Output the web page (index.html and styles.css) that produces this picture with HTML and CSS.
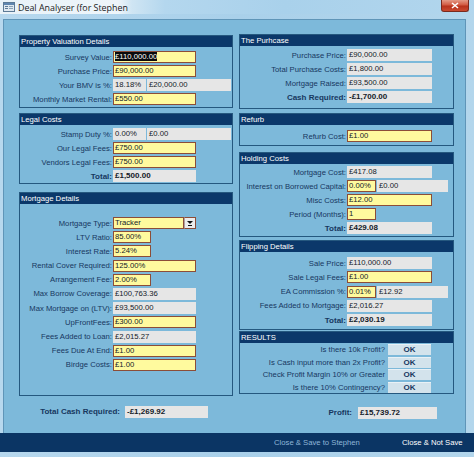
FILE: index.html
```html
<!DOCTYPE html>
<html>
<head>
<meta charset="utf-8">
<link rel="stylesheet" href="styles.css">
</head>
<body>
<div class="titlebar">
  <svg class="appicon" width="12" height="10" viewBox="0 0 12 10">
    <rect x="0.5" y="0.5" width="11" height="9" fill="#dfe8f0" stroke="#5c7a96"/>
    <rect x="1" y="1" width="10" height="2" fill="#5f86b0"/>
    <rect x="2" y="4" width="3" height="1" fill="#5c7a96"/>
    <rect x="6" y="4" width="4" height="1" fill="#8aa2b8"/>
    <rect x="2" y="6" width="3" height="1" fill="#5c7a96"/>
    <rect x="6" y="6" width="4" height="1" fill="#8aa2b8"/>
  </svg>
  <span class="title">Deal Analyser (for Stephen</span>
  <span class="blur"></span>
  <span class="closebtn">
    <svg width="8" height="7" viewBox="0 0 8 7"><path d="M1 1 L7 6 M7 1 L1 6" stroke="#fff" stroke-width="1.6"/></svg>
  </span>
</div>

<div class="form">
  <div class="col col-l">
    <div class="panel">
      <div class="ph">Property Valuation Details</div>
      <div class="pb pb-pvd">
        <div class="row"><span class="lbl">Survey Value:</span><span class="f y wl"><span class="sel">£110,000.00</span></span></div>
        <div class="row"><span class="lbl">Purchase Price:</span><span class="f y wl">£90,000.00</span></div>
        <div class="row"><span class="lbl">Your BMV is %:</span><span class="f g ws">18.18%</span><span class="f g wm2">£20,000.00</span></div>
        <div class="row"><span class="lbl">Monthly Market Rental:</span><span class="f y wl">£550.00</span></div>
      </div>
    </div>

    <div class="panel p-legal">
      <div class="ph">Legal Costs</div>
      <div class="pb pb-legal">
        <div class="row"><span class="lbl">Stamp Duty %:</span><span class="f g ws">0.00%</span><span class="f g wm2">£0.00</span></div>
        <div class="row"><span class="lbl">Our Legal Fees:</span><span class="f y wl">£750.00</span></div>
        <div class="row"><span class="lbl">Vendors Legal Fees:</span><span class="f y wl">£750.00</span></div>
        <div class="row"><span class="lbl b">Total:</span><span class="f g wl b">£1,500.00</span></div>
      </div>
    </div>

    <div class="panel p-mort">
      <div class="ph">Mortgage Details</div>
      <div class="pb pb-mort">
        <div class="row"><span class="lbl">Mortgage Type:</span><span class="f y wc">Tracker</span><span class="ddbtn"><svg width="8" height="7" viewBox="0 0 8 7"><path d="M1 1 H7 L4 4 Z" fill="#111"/><rect x="2" y="5" width="4" height="1" fill="#111"/></svg></span></div>
        <div class="row"><span class="lbl">LTV Ratio:</span><span class="f y wsh">85.00%</span></div>
        <div class="row"><span class="lbl">Interest Rate:</span><span class="f y wsh">5.24%</span></div>
        <div class="row"><span class="lbl">Rental Cover Required:</span><span class="f y wl">125.00%</span></div>
        <div class="row"><span class="lbl">Arrangement Fee:</span><span class="f y wsh">2.00%</span></div>
        <div class="row"><span class="lbl">Max Borrow Coverage:</span><span class="f g wl">£100,763.36</span></div>
        <div class="row"><span class="lbl">Max Mortgage on (LTV):</span><span class="f g wl">£93,500.00</span></div>
        <div class="row"><span class="lbl">UpFrontFees:</span><span class="f y wl">£300.00</span></div>
        <div class="row"><span class="lbl">Fees Added to Loan:</span><span class="f g wl">£2,015.27</span></div>
        <div class="row"><span class="lbl">Fees Due At End:</span><span class="f y wl">£1.00</span></div>
        <div class="row"><span class="lbl">Birdge Costs:</span><span class="f y wl">£1.00</span></div>
      </div>
    </div>

    <div class="row sumrow sum-l"><span class="lbl-sum b">Total Cash Required:</span><span class="f g wt b">-£1,269.92</span></div>
  </div>

  <div class="col col-r">
    <div class="panel">
      <div class="ph">The Purhcase</div>
      <div class="pb pb-purch">
        <div class="row"><span class="lbl lr">Purchase Price:</span><span class="f g wr">£90,000.00</span></div>
        <div class="row"><span class="lbl lr">Total Purchase Costs:</span><span class="f g wr">£1,800.00</span></div>
        <div class="row"><span class="lbl lr">Mortgage Raised:</span><span class="f g wr">£93,500.00</span></div>
        <div class="row"><span class="lbl lr b">Cash Required:</span><span class="f g wr b">-£1,700.00</span></div>
      </div>
    </div>

    <div class="panel p-refurb">
      <div class="ph">Refurb</div>
      <div class="pb pb-refurb">
        <div class="row"><span class="lbl lr">Refurb Cost:</span><span class="f y wr">£1.00</span></div>
      </div>
    </div>

    <div class="panel p-hold">
      <div class="ph">Holding Costs</div>
      <div class="pb pb-hold">
        <div class="row"><span class="lbl lr">Mortgage Cost:</span><span class="f g wr">£417.08</span></div>
        <div class="row"><span class="lbl lr">Interest on Borrowed Capital:</span><span class="f y wrs">0.00%</span><span class="f g wr2">£0.00</span></div>
        <div class="row"><span class="lbl lr">Misc Costs:</span><span class="f y wr">£12.00</span></div>
        <div class="row"><span class="lbl lr">Period (Months):</span><span class="f y wrs">1</span></div>
        <div class="row"><span class="lbl lr b">Total:</span><span class="f g wr b">£429.08</span></div>
      </div>
    </div>

    <div class="panel p-flip">
      <div class="ph">Flipping Details</div>
      <div class="pb pb-flip">
        <div class="row"><span class="lbl lr">Sale Price:</span><span class="f g wr">£110,000.00</span></div>
        <div class="row"><span class="lbl lr">Sale Legal Fees:</span><span class="f y wr">£1.00</span></div>
        <div class="row"><span class="lbl lr">EA Commission %:</span><span class="f y wrs">0.01%</span><span class="f g wr2">£12.92</span></div>
        <div class="row"><span class="lbl lr">Fees Added to Mortgage:</span><span class="f g wr">£2,016.27</span></div>
        <div class="row"><span class="lbl lr b">Total:</span><span class="f g wr b">£2,030.19</span></div>
      </div>
    </div>

    <div class="panel p-res">
      <div class="ph">RESULTS</div>
      <div class="pb pb-res">
        <div class="row rrow"><span class="lbl lres">Is there 10k Profit?</span><span class="ok">OK</span></div>
        <div class="row rrow"><span class="lbl lres">Is Cash input more than 2x Profit?</span><span class="ok">OK</span></div>
        <div class="row rrow"><span class="lbl lres">Check Profit Margin 10% or Greater</span><span class="ok">OK</span></div>
        <div class="row rrow"><span class="lbl lres">Is there 10% Contingency?</span><span class="ok">OK</span></div>
      </div>
    </div>

    <div class="row sumrow sum-r"><span class="lbl-profit b">Profit:</span><span class="f g wp b">£15,739.72</span></div>
  </div>
</div>

<div class="footer">
  <span class="fbtn fsave">Close &amp; Save to Stephen</span>
  <span class="fbtn fnot">Close &amp; Not Save</span>
</div>
</body>
</html>
```

FILE: styles.css
```css
html, body {
  margin: 0;
  padding: 0;
}
body {
  width: 474px;
  height: 457px;
  overflow: hidden;
  background: linear-gradient(90deg, #b7d8ee 0, #a9d0ea 50%, #b3d6ec 100%);
  font-family: "Liberation Sans", Arial, sans-serif;
  font-size: 7.7px;
  color: #17375f;
}

/* title bar */
.titlebar {
  height: 14px;
  display: flex;
  align-items: center;
  background: linear-gradient(90deg, #e9f2f8 0, #eef5fa 118px, #cfe5f3 132px, #b4d7ee 165px, #a9d1eb 60%, #b2d6ed 100%);
}
.appicon {
  margin-left: 3px;
  flex: none;
}
.title {
  margin-left: 3px;
  font-family: "Open Sans", "Liberation Sans", sans-serif;
  font-size: 8.9px;
  color: #1b1b1b;
  white-space: nowrap;
}
.blur {
  flex: 1;
}
.closebtn {
  flex: none;
  width: 28px;
  height: 12px;
  margin-right: 5px;
  align-self: flex-start;
  box-sizing: border-box;
  border: 1px solid #7a2a1e;
  border-top: none;
  border-radius: 0 0 3px 3px;
  background: linear-gradient(#e39a86 0, #d25a42 45%, #b8321c 55%, #c94a30 100%);
  display: flex;
  align-items: center;
  justify-content: center;
}

/* form */
.form {
  margin: 5px 8px 0 3px;
  height: 414px;
  box-sizing: border-box;
  border-top: 1px solid #5f95b8;
  border-left: 1px solid #5f95b8;
  border-right: 1px solid #5f95b8;
  background: #7db9da;
  padding: 14px 0 0 15px;
  display: flex;
  gap: 6px;
}
.col {
  display: flex;
  flex-direction: column;
}
.col-l {
  width: 214px;
  margin-top: 1px;
}
.col-r {
  width: 215px;
}

.panel {
  border: 1px solid #25587f;
}
.ph {
  height: 11px;
  line-height: 11px;
  background: #0b386a;
  color: #ffffff;
  padding-left: 1px;
  white-space: nowrap;
}
.pb {
  display: flex;
  flex-direction: column;
  gap: 2px;
}
.pb-pvd { padding: 4px 0 2px; }
.p-legal { margin-top: 5px; }
.pb-legal { padding: 3px 0 1px; }
.p-mort { margin-top: 8px; }
.pb-mort { padding: 13px 0 24px; gap: 2.2px; }

.pb-purch { padding: 3px 0 5px; }
.p-refurb { margin-top: 4px; }
.pb-refurb { padding: 5px 0 3px; }
.p-hold { margin-top: 6px; }
.pb-hold { padding: 2px 0 2px; }
.p-flip { margin-top: 3px; }
.pb-flip { padding: 5px 0 3px; gap: 2.25px; }
.p-res { margin-top: 1px; }
.pb-res { padding: 1px 0 0; gap: 1.67px; }

.row {
  display: flex;
  align-items: center;
  height: 12px;
}
.lbl {
  box-sizing: border-box;
  width: 93px;
  flex: none;
  text-align: right;
  padding-right: 1px;
  white-space: nowrap;
  color: #17375f;
}
.lr {
  width: 107px;
}
.b {
  font-weight: bold;
  font-size: 8px;
}

.f {
  box-sizing: border-box;
  flex: none;
  height: 12px;
  line-height: 10px;
  padding-left: 1px;
  white-space: nowrap;
  overflow: hidden;
  color: #141a28;
}
.y {
  background: #fffa9e;
  border: 1px solid #8c4d38;
}
.g {
  background: #e6e6e6;
  border: 1px solid #e6e6e6;
}
.sel {
  background: #0a0a0a;
  color: #ffffff;
}

.wl { width: 83px; }
.ws { width: 33px; }
.wm2 { width: 84px; margin-left: 1px; }
.wsh { width: 38px; }
.wc { width: 71px; }
.wr { width: 85px; }
.wrs { width: 29px; }
.wr2 { width: 71px; margin-left: 1px; }
.wt { width: 83px; }
.wp { width: 79px; }

.ddbtn {
  box-sizing: border-box;
  width: 12px;
  height: 12px;
  background: #ececec;
  border: 1px solid #8c4d38;
  border-left: 1px solid #b0a0a0;
  display: flex;
  align-items: center;
  justify-content: center;
}

/* results */
.rrow {
  height: 11px;
}
.lres {
  width: 148px;
  padding-right: 3px;
}
.ok {
  box-sizing: border-box;
  width: 43px;
  height: 11px;
  line-height: 10px;
  text-align: center;
  font-weight: bold;
  font-size: 8px;
  color: #17375f;
  background: #d3e3ec;
  border-top: 1px solid #e9f1f6;
}

/* summary rows */
.sumrow {
  height: 12px;
}
.sum-l {
  margin-top: 10px;
}
.sum-r {
  margin-top: 13px;
}
.lbl-sum {
  box-sizing: border-box;
  width: 106px;
  padding-right: 5px;
  text-align: right;
  white-space: nowrap;
}
.lbl-profit {
  box-sizing: border-box;
  width: 119px;
  padding-right: 6px;
  text-align: right;
  white-space: nowrap;
}

/* footer */
.footer {
  height: 19px;
  background: #0b3564;
  display: flex;
  align-items: center;
}
.fbtn {
  white-space: nowrap;
}
.fsave {
  margin-left: 274px;
  color: #8fb5d8;
}
.fnot {
  margin-left: 42px;
  color: #ffffff;
}
```
